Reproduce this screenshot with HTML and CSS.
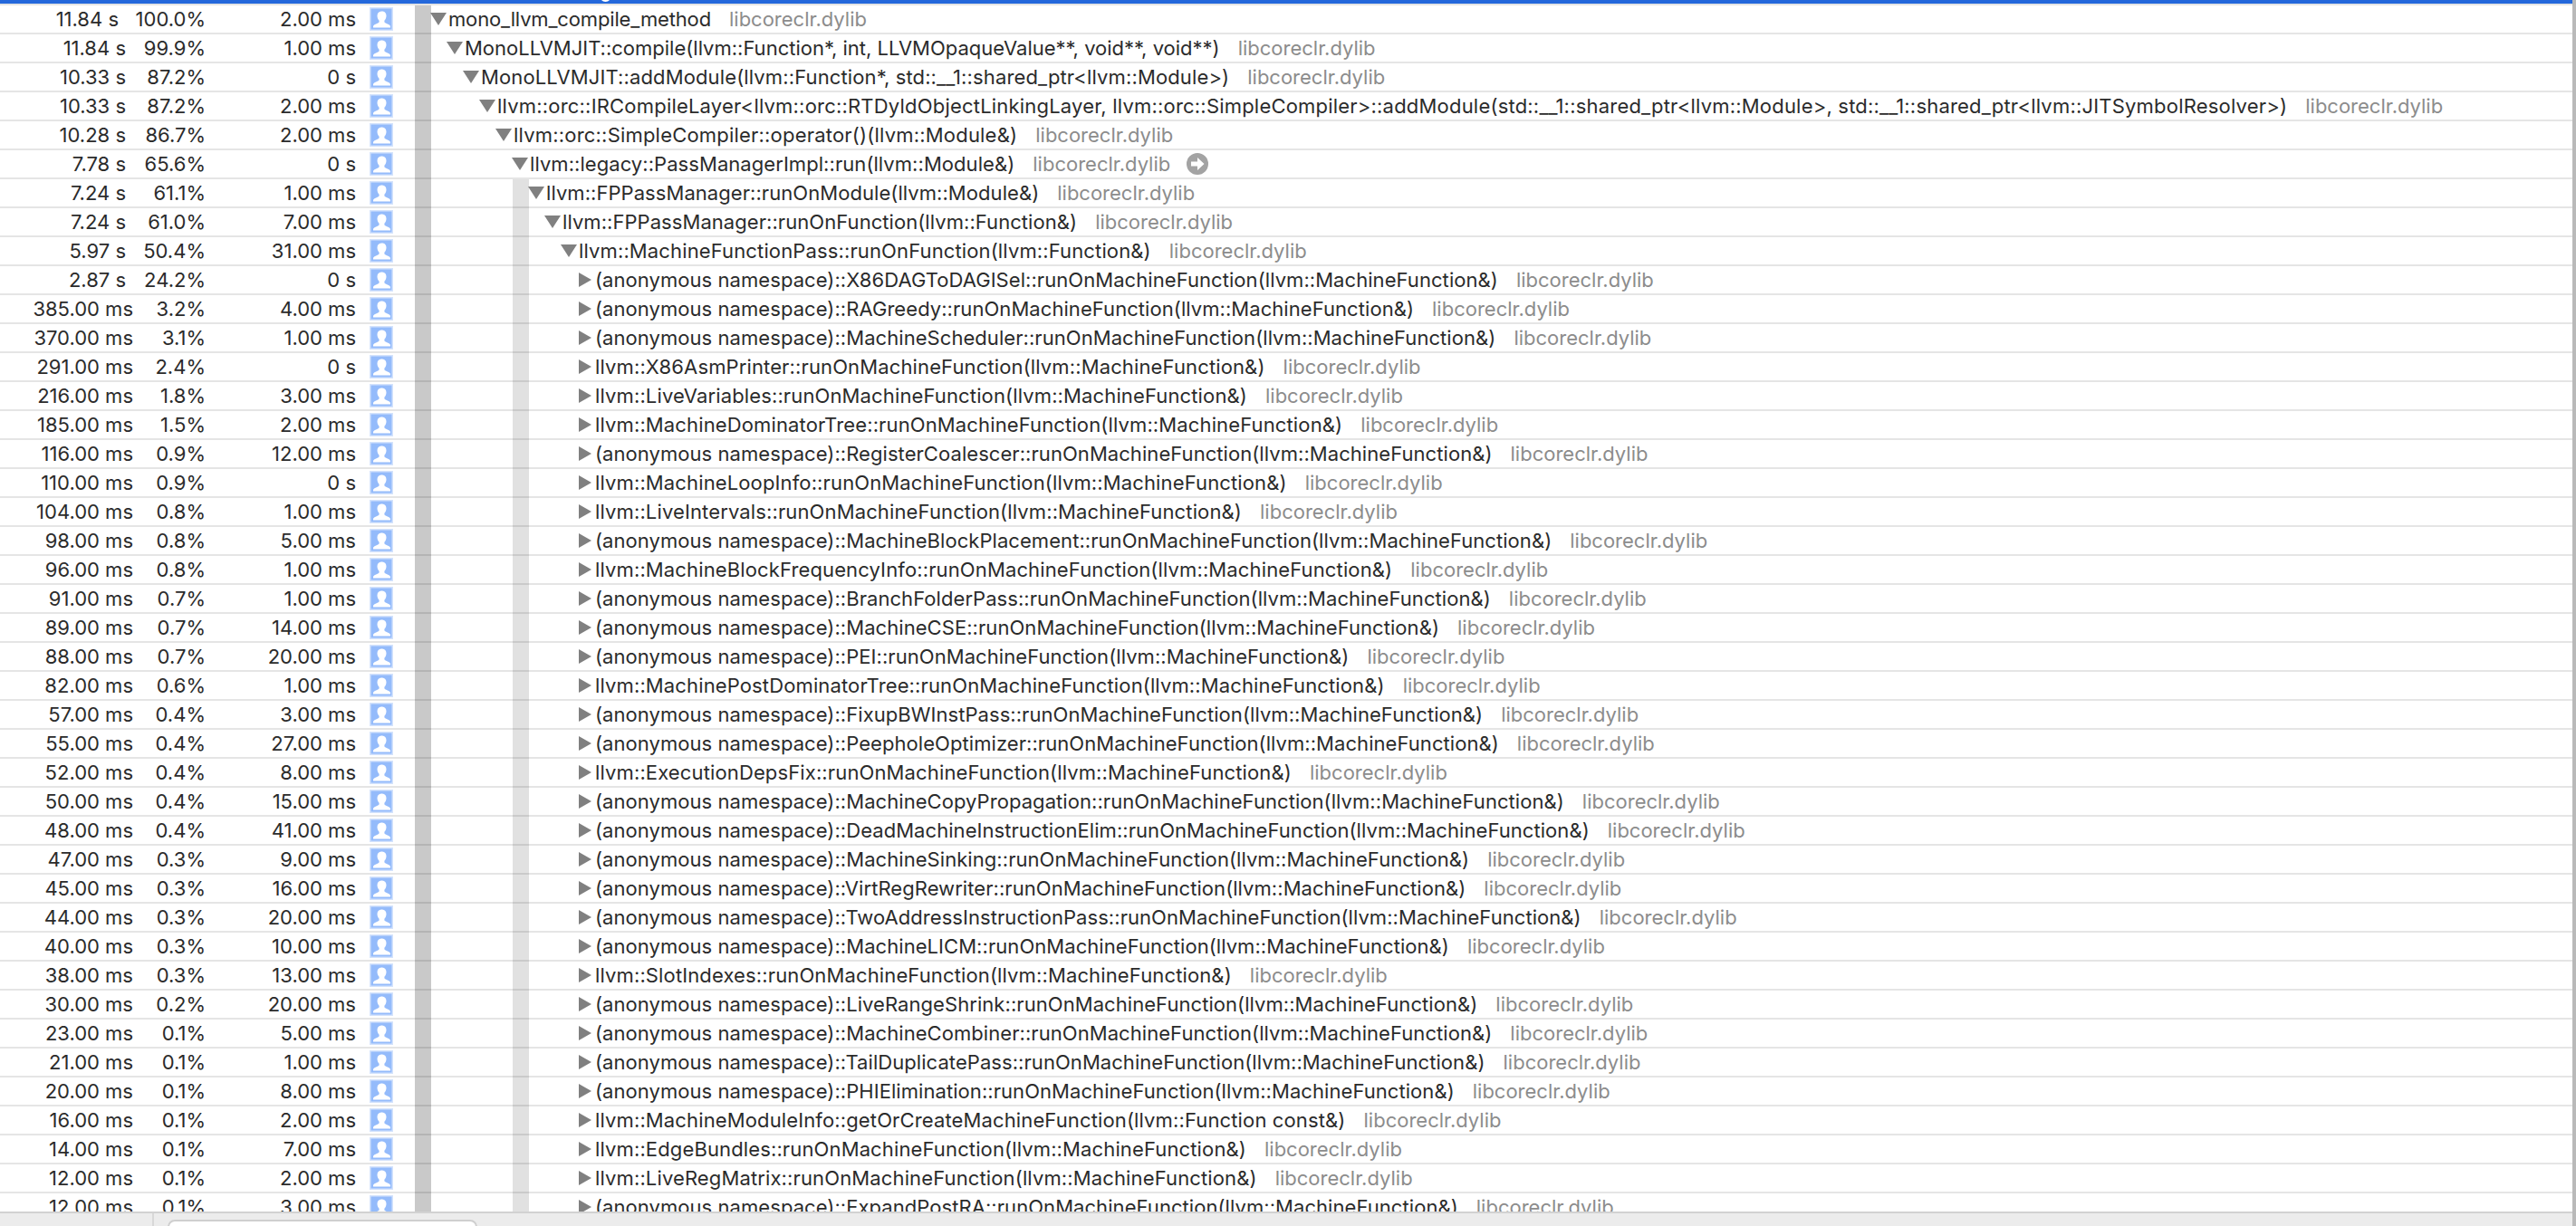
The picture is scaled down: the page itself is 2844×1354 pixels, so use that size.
FILE: index.html
```html
<!DOCTYPE html>
<html lang="en">
<head>
<meta charset="utf-8">
<title>Time Profiler</title>
<link rel="stylesheet" href="styles.css">
</head>
<body>
<svg class="defs" width="0" height="0" aria-hidden="true">
  <symbol id="user" viewBox="0 0 26 26">
    <rect x="0" y="0" width="26" height="26" fill="#d4e3fc"/>
    <rect x="1.5" y="1.5" width="23" height="23" fill="#94bbfb"/>
    <path fill="#fff" d="M13 4.500c-2.900 0-4.500 2.200-4.500 5 0 2.200.9 4 2.100 5.200v1.600c0 1-3.300 2-5.100 3-.9.5-1.500 1.200-1.500 2.200v1h19v-1c0-1-.6-1.700-1.500-2.200-1.800-1-5.100-2-5.100-3v-1.600c1.200-1.200 2.100-3 2.100-5.200 0-2.800-1.600-5-4.500-5z"/>
  </symbol>
</svg>
<header class="topbar"></header>
<main class="table">
  <div class="guide guide-a"></div>
  <div class="guide guide-b"></div>
  <div class="row"><span class="total full">11.84 s</span><span class="pct">100.0%</span><span class="self">2.00 ms</span><svg class="icon"><use href="#user"/></svg><div class="tree d0"><i class="tri down"></i><span class="sym tighter">mono_llvm_compile_method</span><span class="lib">libcoreclr.dylib</span></div></div>
  <div class="row"><span class="total sec">11.84 s</span><span class="pct">99.9%</span><span class="self">1.00 ms</span><svg class="icon"><use href="#user"/></svg><div class="tree d1"><i class="tri down"></i><span class="sym tight">MonoLLVMJIT::compile(llvm::Function*, int, LLVMOpaqueValue**, void**, void**)</span><span class="lib">libcoreclr.dylib</span></div></div>
  <div class="row"><span class="total sec">10.33 s</span><span class="pct">87.2%</span><span class="self">0 s</span><svg class="icon"><use href="#user"/></svg><div class="tree d2"><i class="tri down"></i><span class="sym wide">MonoLLVMJIT::addModule(llvm::Function*, std::__1::shared_ptr&lt;llvm::Module&gt;)</span><span class="lib">libcoreclr.dylib</span></div></div>
  <div class="row"><span class="total sec">10.33 s</span><span class="pct">87.2%</span><span class="self">2.00 ms</span><svg class="icon"><use href="#user"/></svg><div class="tree d3"><i class="tri down"></i><span class="sym wider">llvm::orc::IRCompileLayer&lt;llvm::orc::RTDyldObjectLinkingLayer, llvm::orc::SimpleCompiler&gt;::addModule(std::__1::shared_ptr&lt;llvm::Module&gt;, std::__1::shared_ptr&lt;llvm::JITSymbolResolver&gt;)</span><span class="lib">libcoreclr.dylib</span></div></div>
  <div class="row"><span class="total sec">10.28 s</span><span class="pct">86.7%</span><span class="self">2.00 ms</span><svg class="icon"><use href="#user"/></svg><div class="tree d4"><i class="tri down"></i><span class="sym wider">llvm::orc::SimpleCompiler::operator()(llvm::Module&amp;)</span><span class="lib">libcoreclr.dylib</span></div></div>
  <div class="row"><span class="total sec">7.78 s</span><span class="pct">65.6%</span><span class="self">0 s</span><svg class="icon"><use href="#user"/></svg><div class="tree d5"><i class="tri down"></i><span class="sym">llvm::legacy::PassManagerImpl::run(llvm::Module&amp;)</span><span class="lib">libcoreclr.dylib</span><svg class="focus" viewBox="0 0 24 24"><circle cx="12" cy="12" r="12" fill="#a3a3a3"/><path fill="#fff" d="M5 9.500h7V5l7.500 7-7.500 7v-4.500H5z"/></svg></div></div>
  <div class="row"><span class="total sec">7.24 s</span><span class="pct">61.1%</span><span class="self">1.00 ms</span><svg class="icon"><use href="#user"/></svg><div class="tree d6"><i class="tri down"></i><span class="sym">llvm::FPPassManager::runOnModule(llvm::Module&amp;)</span><span class="lib">libcoreclr.dylib</span></div></div>
  <div class="row"><span class="total sec">7.24 s</span><span class="pct">61.0%</span><span class="self">7.00 ms</span><svg class="icon"><use href="#user"/></svg><div class="tree d7"><i class="tri down"></i><span class="sym">llvm::FPPassManager::runOnFunction(llvm::Function&amp;)</span><span class="lib">libcoreclr.dylib</span></div></div>
  <div class="row"><span class="total sec">5.97 s</span><span class="pct">50.4%</span><span class="self">31.00 ms</span><svg class="icon"><use href="#user"/></svg><div class="tree d8"><i class="tri down"></i><span class="sym wide">llvm::MachineFunctionPass::runOnFunction(llvm::Function&amp;)</span><span class="lib">libcoreclr.dylib</span></div></div>
  <div class="row"><span class="total sec">2.87 s</span><span class="pct">24.2%</span><span class="self">0 s</span><svg class="icon"><use href="#user"/></svg><div class="tree d9"><i class="tri right"></i><span class="sym">(anonymous namespace)::X86DAGToDAGISel::runOnMachineFunction(llvm::MachineFunction&amp;)</span><span class="lib">libcoreclr.dylib</span></div></div>
  <div class="row"><span class="total">385.00 ms</span><span class="pct">3.2%</span><span class="self">4.00 ms</span><svg class="icon"><use href="#user"/></svg><div class="tree d9"><i class="tri right"></i><span class="sym">(anonymous namespace)::RAGreedy::runOnMachineFunction(llvm::MachineFunction&amp;)</span><span class="lib">libcoreclr.dylib</span></div></div>
  <div class="row"><span class="total">370.00 ms</span><span class="pct">3.1%</span><span class="self">1.00 ms</span><svg class="icon"><use href="#user"/></svg><div class="tree d9"><i class="tri right"></i><span class="sym">(anonymous namespace)::MachineScheduler::runOnMachineFunction(llvm::MachineFunction&amp;)</span><span class="lib">libcoreclr.dylib</span></div></div>
  <div class="row"><span class="total">291.00 ms</span><span class="pct">2.4%</span><span class="self">0 s</span><svg class="icon"><use href="#user"/></svg><div class="tree d9"><i class="tri right"></i><span class="sym wide">llvm::X86AsmPrinter::runOnMachineFunction(llvm::MachineFunction&amp;)</span><span class="lib">libcoreclr.dylib</span></div></div>
  <div class="row"><span class="total">216.00 ms</span><span class="pct">1.8%</span><span class="self">3.00 ms</span><svg class="icon"><use href="#user"/></svg><div class="tree d9"><i class="tri right"></i><span class="sym wide">llvm::LiveVariables::runOnMachineFunction(llvm::MachineFunction&amp;)</span><span class="lib">libcoreclr.dylib</span></div></div>
  <div class="row"><span class="total">185.00 ms</span><span class="pct">1.5%</span><span class="self">2.00 ms</span><svg class="icon"><use href="#user"/></svg><div class="tree d9"><i class="tri right"></i><span class="sym wide">llvm::MachineDominatorTree::runOnMachineFunction(llvm::MachineFunction&amp;)</span><span class="lib">libcoreclr.dylib</span></div></div>
  <div class="row"><span class="total">116.00 ms</span><span class="pct">0.9%</span><span class="self">12.00 ms</span><svg class="icon"><use href="#user"/></svg><div class="tree d9"><i class="tri right"></i><span class="sym">(anonymous namespace)::RegisterCoalescer::runOnMachineFunction(llvm::MachineFunction&amp;)</span><span class="lib">libcoreclr.dylib</span></div></div>
  <div class="row"><span class="total">110.00 ms</span><span class="pct">0.9%</span><span class="self">0 s</span><svg class="icon"><use href="#user"/></svg><div class="tree d9"><i class="tri right"></i><span class="sym wide">llvm::MachineLoopInfo::runOnMachineFunction(llvm::MachineFunction&amp;)</span><span class="lib">libcoreclr.dylib</span></div></div>
  <div class="row"><span class="total">104.00 ms</span><span class="pct">0.8%</span><span class="self">1.00 ms</span><svg class="icon"><use href="#user"/></svg><div class="tree d9"><i class="tri right"></i><span class="sym wide">llvm::LiveIntervals::runOnMachineFunction(llvm::MachineFunction&amp;)</span><span class="lib">libcoreclr.dylib</span></div></div>
  <div class="row"><span class="total">98.00 ms</span><span class="pct">0.8%</span><span class="self">5.00 ms</span><svg class="icon"><use href="#user"/></svg><div class="tree d9"><i class="tri right"></i><span class="sym">(anonymous namespace)::MachineBlockPlacement::runOnMachineFunction(llvm::MachineFunction&amp;)</span><span class="lib">libcoreclr.dylib</span></div></div>
  <div class="row"><span class="total">96.00 ms</span><span class="pct">0.8%</span><span class="self">1.00 ms</span><svg class="icon"><use href="#user"/></svg><div class="tree d9"><i class="tri right"></i><span class="sym wide">llvm::MachineBlockFrequencyInfo::runOnMachineFunction(llvm::MachineFunction&amp;)</span><span class="lib">libcoreclr.dylib</span></div></div>
  <div class="row"><span class="total">91.00 ms</span><span class="pct">0.7%</span><span class="self">1.00 ms</span><svg class="icon"><use href="#user"/></svg><div class="tree d9"><i class="tri right"></i><span class="sym">(anonymous namespace)::BranchFolderPass::runOnMachineFunction(llvm::MachineFunction&amp;)</span><span class="lib">libcoreclr.dylib</span></div></div>
  <div class="row"><span class="total">89.00 ms</span><span class="pct">0.7%</span><span class="self">14.00 ms</span><svg class="icon"><use href="#user"/></svg><div class="tree d9"><i class="tri right"></i><span class="sym">(anonymous namespace)::MachineCSE::runOnMachineFunction(llvm::MachineFunction&amp;)</span><span class="lib">libcoreclr.dylib</span></div></div>
  <div class="row"><span class="total">88.00 ms</span><span class="pct">0.7%</span><span class="self">20.00 ms</span><svg class="icon"><use href="#user"/></svg><div class="tree d9"><i class="tri right"></i><span class="sym">(anonymous namespace)::PEI::runOnMachineFunction(llvm::MachineFunction&amp;)</span><span class="lib">libcoreclr.dylib</span></div></div>
  <div class="row"><span class="total">82.00 ms</span><span class="pct">0.6%</span><span class="self">1.00 ms</span><svg class="icon"><use href="#user"/></svg><div class="tree d9"><i class="tri right"></i><span class="sym wide">llvm::MachinePostDominatorTree::runOnMachineFunction(llvm::MachineFunction&amp;)</span><span class="lib">libcoreclr.dylib</span></div></div>
  <div class="row"><span class="total">57.00 ms</span><span class="pct">0.4%</span><span class="self">3.00 ms</span><svg class="icon"><use href="#user"/></svg><div class="tree d9"><i class="tri right"></i><span class="sym">(anonymous namespace)::FixupBWInstPass::runOnMachineFunction(llvm::MachineFunction&amp;)</span><span class="lib">libcoreclr.dylib</span></div></div>
  <div class="row"><span class="total">55.00 ms</span><span class="pct">0.4%</span><span class="self">27.00 ms</span><svg class="icon"><use href="#user"/></svg><div class="tree d9"><i class="tri right"></i><span class="sym">(anonymous namespace)::PeepholeOptimizer::runOnMachineFunction(llvm::MachineFunction&amp;)</span><span class="lib">libcoreclr.dylib</span></div></div>
  <div class="row"><span class="total">52.00 ms</span><span class="pct">0.4%</span><span class="self">8.00 ms</span><svg class="icon"><use href="#user"/></svg><div class="tree d9"><i class="tri right"></i><span class="sym wide">llvm::ExecutionDepsFix::runOnMachineFunction(llvm::MachineFunction&amp;)</span><span class="lib">libcoreclr.dylib</span></div></div>
  <div class="row"><span class="total">50.00 ms</span><span class="pct">0.4%</span><span class="self">15.00 ms</span><svg class="icon"><use href="#user"/></svg><div class="tree d9"><i class="tri right"></i><span class="sym">(anonymous namespace)::MachineCopyPropagation::runOnMachineFunction(llvm::MachineFunction&amp;)</span><span class="lib">libcoreclr.dylib</span></div></div>
  <div class="row"><span class="total">48.00 ms</span><span class="pct">0.4%</span><span class="self">41.00 ms</span><svg class="icon"><use href="#user"/></svg><div class="tree d9"><i class="tri right"></i><span class="sym">(anonymous namespace)::DeadMachineInstructionElim::runOnMachineFunction(llvm::MachineFunction&amp;)</span><span class="lib">libcoreclr.dylib</span></div></div>
  <div class="row"><span class="total">47.00 ms</span><span class="pct">0.3%</span><span class="self">9.00 ms</span><svg class="icon"><use href="#user"/></svg><div class="tree d9"><i class="tri right"></i><span class="sym">(anonymous namespace)::MachineSinking::runOnMachineFunction(llvm::MachineFunction&amp;)</span><span class="lib">libcoreclr.dylib</span></div></div>
  <div class="row"><span class="total">45.00 ms</span><span class="pct">0.3%</span><span class="self">16.00 ms</span><svg class="icon"><use href="#user"/></svg><div class="tree d9"><i class="tri right"></i><span class="sym">(anonymous namespace)::VirtRegRewriter::runOnMachineFunction(llvm::MachineFunction&amp;)</span><span class="lib">libcoreclr.dylib</span></div></div>
  <div class="row"><span class="total">44.00 ms</span><span class="pct">0.3%</span><span class="self">20.00 ms</span><svg class="icon"><use href="#user"/></svg><div class="tree d9"><i class="tri right"></i><span class="sym">(anonymous namespace)::TwoAddressInstructionPass::runOnMachineFunction(llvm::MachineFunction&amp;)</span><span class="lib">libcoreclr.dylib</span></div></div>
  <div class="row"><span class="total">40.00 ms</span><span class="pct">0.3%</span><span class="self">10.00 ms</span><svg class="icon"><use href="#user"/></svg><div class="tree d9"><i class="tri right"></i><span class="sym">(anonymous namespace)::MachineLICM::runOnMachineFunction(llvm::MachineFunction&amp;)</span><span class="lib">libcoreclr.dylib</span></div></div>
  <div class="row"><span class="total">38.00 ms</span><span class="pct">0.3%</span><span class="self">13.00 ms</span><svg class="icon"><use href="#user"/></svg><div class="tree d9"><i class="tri right"></i><span class="sym wide">llvm::SlotIndexes::runOnMachineFunction(llvm::MachineFunction&amp;)</span><span class="lib">libcoreclr.dylib</span></div></div>
  <div class="row"><span class="total">30.00 ms</span><span class="pct">0.2%</span><span class="self">20.00 ms</span><svg class="icon"><use href="#user"/></svg><div class="tree d9"><i class="tri right"></i><span class="sym">(anonymous namespace)::LiveRangeShrink::runOnMachineFunction(llvm::MachineFunction&amp;)</span><span class="lib">libcoreclr.dylib</span></div></div>
  <div class="row"><span class="total">23.00 ms</span><span class="pct">0.1%</span><span class="self">5.00 ms</span><svg class="icon"><use href="#user"/></svg><div class="tree d9"><i class="tri right"></i><span class="sym">(anonymous namespace)::MachineCombiner::runOnMachineFunction(llvm::MachineFunction&amp;)</span><span class="lib">libcoreclr.dylib</span></div></div>
  <div class="row"><span class="total">21.00 ms</span><span class="pct">0.1%</span><span class="self">1.00 ms</span><svg class="icon"><use href="#user"/></svg><div class="tree d9"><i class="tri right"></i><span class="sym">(anonymous namespace)::TailDuplicatePass::runOnMachineFunction(llvm::MachineFunction&amp;)</span><span class="lib">libcoreclr.dylib</span></div></div>
  <div class="row"><span class="total">20.00 ms</span><span class="pct">0.1%</span><span class="self">8.00 ms</span><svg class="icon"><use href="#user"/></svg><div class="tree d9"><i class="tri right"></i><span class="sym">(anonymous namespace)::PHIElimination::runOnMachineFunction(llvm::MachineFunction&amp;)</span><span class="lib">libcoreclr.dylib</span></div></div>
  <div class="row"><span class="total">16.00 ms</span><span class="pct">0.1%</span><span class="self">2.00 ms</span><svg class="icon"><use href="#user"/></svg><div class="tree d9"><i class="tri right"></i><span class="sym wide">llvm::MachineModuleInfo::getOrCreateMachineFunction(llvm::Function const&amp;)</span><span class="lib">libcoreclr.dylib</span></div></div>
  <div class="row"><span class="total">14.00 ms</span><span class="pct">0.1%</span><span class="self">7.00 ms</span><svg class="icon"><use href="#user"/></svg><div class="tree d9"><i class="tri right"></i><span class="sym wide">llvm::EdgeBundles::runOnMachineFunction(llvm::MachineFunction&amp;)</span><span class="lib">libcoreclr.dylib</span></div></div>
  <div class="row"><span class="total">12.00 ms</span><span class="pct">0.1%</span><span class="self">2.00 ms</span><svg class="icon"><use href="#user"/></svg><div class="tree d9"><i class="tri right"></i><span class="sym wide">llvm::LiveRegMatrix::runOnMachineFunction(llvm::MachineFunction&amp;)</span><span class="lib">libcoreclr.dylib</span></div></div>
  <div class="row"><span class="total">12.00 ms</span><span class="pct">0.1%</span><span class="self">3.00 ms</span><svg class="icon"><use href="#user"/></svg><div class="tree d9"><i class="tri right"></i><span class="sym">(anonymous namespace)::ExpandPostRA::runOnMachineFunction(llvm::MachineFunction&amp;)</span><span class="lib">libcoreclr.dylib</span></div></div>
</main>
<footer class="footer">
  <div class="footer-left"></div>
  <div class="search"></div>
</footer>
</body>
</html>
```
FILE: styles.css
```css
* { box-sizing: border-box; }
html, body { margin: 0; height: 100%; background: #fff; }
body {
  display: flex;
  flex-direction: column;
  height: 1354px;
  overflow: hidden;
  border-right: 4px solid #b9b9b9;
  font-family: Inter, "Liberation Sans", sans-serif;
  font-size: 22px;
  color: #2b2b2b;
}
.defs { position: absolute; }
.topbar {
  position: relative;
  flex: none;
  height: 6px;
  background: #2468db;
  border-bottom: 2px solid #e4e4e4;
  overflow: hidden;
}
.topbar::after {
  content: "";
  position: absolute;
  left: 662px;
  top: -11px;
  width: 13px;
  height: 13px;
  border-radius: 50%;
  background: #fff;
}
.table {
  position: relative;
  flex: 1;
  min-height: 0;
  overflow: hidden;
}
.guide { position: absolute; bottom: 0; width: 18px; }
.guide-a { left: 458px; top: 0; background: #c9c9c9; }
.guide-b { left: 566px; top: 192px; background: #e1e1e1; }
.row {
  position: relative;
  display: grid;
  grid-template-columns: 147px 80px 166px 15px 26px 1fr;
  align-items: center;
  height: 32px;
  border-bottom: 2px solid rgba(0, 0, 0, 0.1);
  white-space: nowrap;
}
.total, .pct, .self { text-align: right; }
.total.sec { padding-right: 8px; }
.total.full { padding-right: 16px; }
.icon { grid-column: 5; width: 26px; height: 26px; }
.tree {
  grid-column: 6;
  display: flex;
  align-items: center;
  padding-left: 41px;
}
.d1 { margin-left: 18px; }
.d2 { margin-left: 36px; }
.d3 { margin-left: 54px; }
.d4 { margin-left: 72px; }
.d5 { margin-left: 90px; }
.d6 { margin-left: 108px; }
.d7 { margin-left: 126px; }
.d8 { margin-left: 144px; }
.d9 { margin-left: 162px; }
.tri { flex: none; display: block; width: 20px; background: #808080; }
.tri.down {
  height: 14px;
  clip-path: polygon(0 0, 18px 0, 9px 100%);
}
.tri.right {
  height: 16px;
  clip-path: polygon(2px 0, 16px 50%, 2px 100%);
}
.sym { letter-spacing: 0.06px; }
.sym.wide { letter-spacing: 0.13px; }
.sym.wider { letter-spacing: 0.2px; }
.sym.tight { letter-spacing: 0; }
.sym.tighter { letter-spacing: -0.15px; }
.lib { margin-left: 20px; color: #8c8c8c; }
.focus { width: 24px; height: 24px; margin-left: 18px; }
.footer {
  flex: none;
  height: 16px;
  display: flex;
  background: #ececec;
  border-top: 2px solid #d2d2d2;
}
.footer-left { width: 170px; border-right: 2px solid #d8d8d8; }
.search {
  width: 342px;
  height: 20px;
  margin: 7px 0 0 15px;
  background: #fff;
  border: 2px solid #cfcfcf;
  border-radius: 8px;
}
```
